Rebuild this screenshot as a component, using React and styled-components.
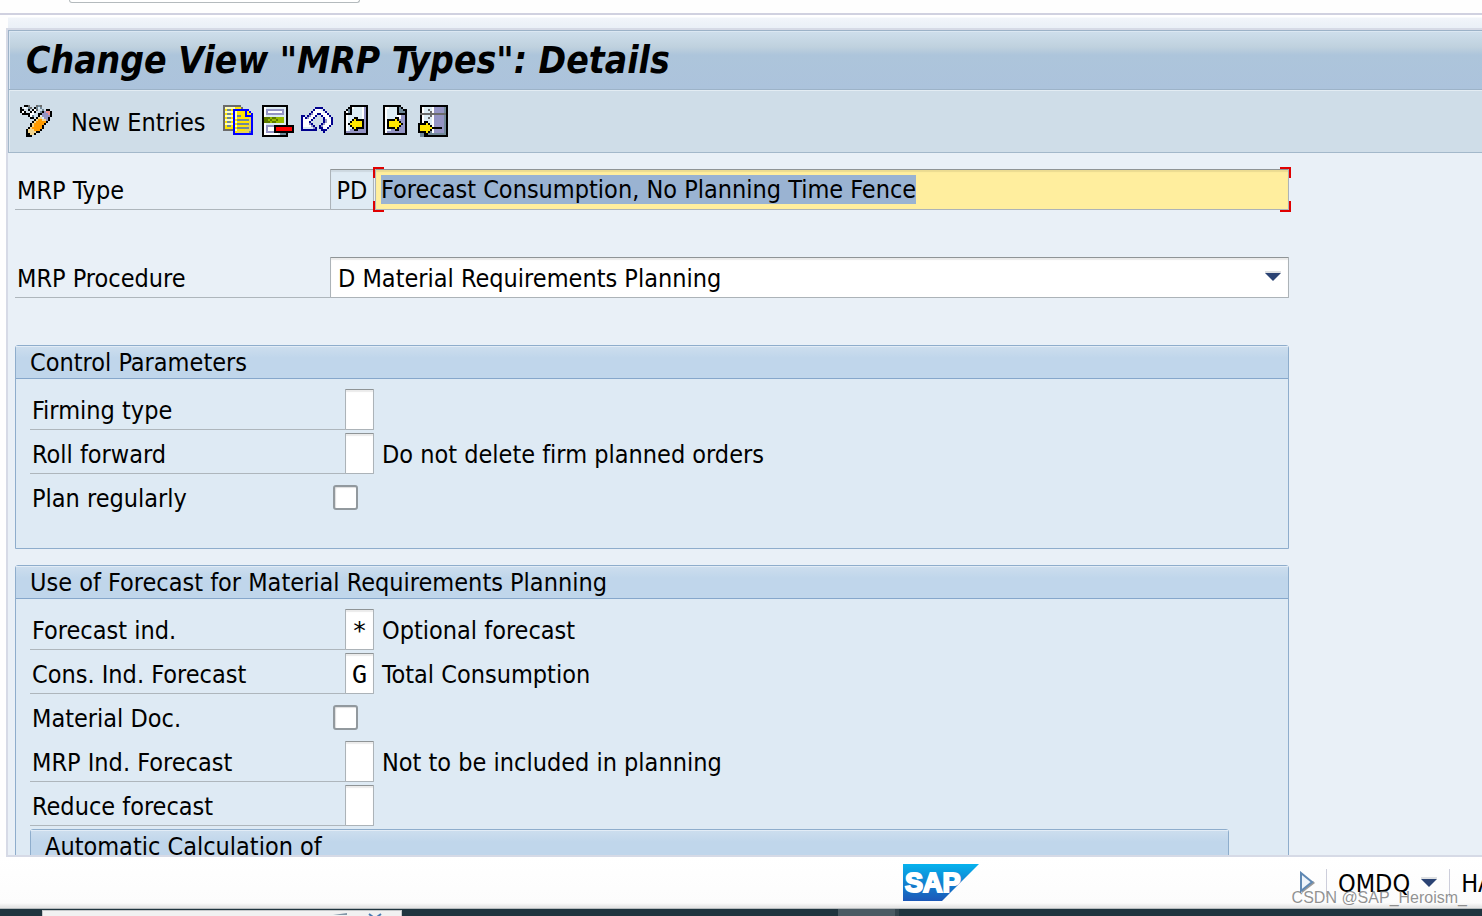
import React, { useEffect, useRef } from "react";
import styled, { createGlobalStyle } from "styled-components";

const GlobalStyle = createGlobalStyle`
  * {
    box-sizing: border-box;
  }

  body {
    margin: 0;
    background: #fefefe;
    color: #000;
    font-family: "DejaVu Sans Condensed", "Noto Sans", sans-serif;
    font-size: 25px;
    font-variant-ligatures: none;
    line-height: 30px;
  }

  button, input, select {
    font: inherit;
    color: inherit;
  }
`;

const Page = styled.div`
  position: relative;
  display: flex;
  flex-direction: column;
  height: 100vh;
  overflow: hidden;
`;

const CommandBar = styled.div`
  flex: none;
  height: 15px;
  padding-left: 69px;
  border-bottom: 2px solid #d0d1e0;
`;

const CommandInput = styled.input`
  display: block;
  width: 291px;
  height: 3px;
  padding: 0;
  border: 1px solid #b4babd;
  border-top: none;
  border-radius: 0 0 3px 3px;
  outline: none;
`;

const Shade = styled.div`
  flex: none;
  height: 13px;
  margin-left: 8px;
  background: linear-gradient(#ffffff 2px, #f1f5fa 3px, #eaf0f7);
`;

const Screen = styled.main`
  flex: 1;
  min-height: 0;
  margin-left: 6px;
  border: 2px solid #d6dae6;
  border-right: none;
  background: #e9f0f7;
  overflow: hidden;
`;

const TitleBar = styled.header`
  height: 60px;
  padding: 0 17px;
  border: 1px solid #9db3c8;
  border-right: none;
  background: linear-gradient(#cfdfec, #bfd1de 16px, #adc5db 24px, #acc3dc);
  box-shadow: inset 1px 1px #dbe7f2;
`;

const Title = styled.h1`
  margin: 0;
  font-size: 37px;
  font-style: italic;
  font-weight: bold;
  line-height: 60px;
  white-space: nowrap;
`;

const Toolbar = styled.div`
  display: flex;
  align-items: center;
  gap: 7px;
  height: 63px;
  padding-left: 11px;
  border: 1px solid #a3b8ca;
  border-top: none;
  border-right: none;
  background: #cfdde8;
  box-shadow: inset 1px 1px #e3ecf3;
`;

const IconButton = styled.button`
  width: 32px;
  height: 32px;
  padding: 0;
  border: none;
  background: none;

  svg {
    display: block;
  }
`;

const TextButton = styled.button`
  padding: 3px 10px 0 12px;
  border: none;
  background: none;
  white-space: nowrap;
`;

const Form = styled.div`
  max-width: 1288px;
  padding: 16px 7px 0;
`;

const Row = styled.div`
  display: flex;
  align-items: center;
  height: 41px;
  margin-bottom: ${(p) => (p.$spaced ? 47 : 3)}px;
`;

const Label = styled.label`
  flex: none;
  width: ${(p) => (p.$plain ? 303 : 315)}px;
  height: 41px;
  padding-left: 2px;
  border-bottom: ${(p) => (p.$plain ? "none" : "1px solid #aeb6bc")};
  line-height: 44px;
  white-space: nowrap;
`;

const Field = styled.input`
  flex: none;
  width: ${(p) => p.$width}px;
  height: 41px;
  padding: 2px 0 0;
  border: 1px solid #acb3b8;
  border-top-color: #8f9496;
  border-radius: 1px;
  outline: none;
  background: ${(p) => (p.readOnly ? "#dfebf4" : "#ffffff")};
  box-shadow: inset 0 2px 1px rgba(0, 0, 0, 0.08);
  font-family: ${(p) => (p.$mono ? '"DejaVu Sans Mono", monospace' : "inherit")};
  text-align: center;
`;

const FocusFrame = styled.div`
  position: relative;
  flex: 1;
  min-width: 0;
  margin-left: 1px;
`;

const DescriptionField = styled(Field)`
  display: block;
  width: 100%;
  padding: 0 0 0 5px;
  background: #ffee9e;
  text-align: left;

  &::selection {
    background: #9ab3d2;
    color: #000;
  }
`;

const Corner = styled.span`
  position: absolute;
  width: 11px;
  height: 11px;
  border: 0 solid #e00000;
  ${(p) => (p.$top ? "top: -2px; border-top-width: 2px;" : "bottom: -2px; border-bottom-width: 2px;")}
  ${(p) => (p.$left ? "left: -2px; border-left-width: 2px;" : "right: -2px; border-right-width: 2px;")}
`;

const SelectWrap = styled.div`
  position: relative;
  flex: 1;
  min-width: 0;

  svg {
    position: absolute;
    top: 14px;
    right: 7px;
    pointer-events: none;
  }
`;

const Select = styled.select`
  appearance: none;
  display: block;
  width: 100%;
  height: 41px;
  padding: 2px 30px 0 7px;
  border: 1px solid #acb3b8;
  border-top-color: #8f9496;
  border-radius: 1px;
  outline: none;
  background: #ffffff;
  box-shadow: inset 0 2px 1px rgba(0, 0, 0, 0.08);
`;

const Group = styled.section`
  margin: 0 ${(p) => (p.$nested ? "59px" : "0")} 16px 0;
  border: 1px solid #8eadcc;
  border-radius: 3px 3px 0 0;
  background: #deeaf4;
`;

const GroupTitle = styled.h2`
  height: 33px;
  margin: 0;
  padding-left: 14px;
  border-bottom: 1px solid #86a7cb;
  background: linear-gradient(#cddeee, #c0d6eb 12px, #c0d6eb);
  box-shadow: inset 0 1px #e2ecf6;
  font-size: 25px;
  font-weight: normal;
  line-height: 34px;
  white-space: nowrap;
`;

const GroupBody = styled.div`
  padding: 10px 0 ${(p) => (p.$short ? 27 : 0)}px 14px;
`;

const Checkbox = styled.input`
  appearance: none;
  width: 25px;
  height: 25px;
  margin: 0;
  border: 2px solid #92999e;
  border-radius: 3px;
  background: #ffffff;
  box-shadow: inset 1px 1px 1px #dddddd;

  &:checked {
    background: #4d6fa3;
  }
`;

const Note = styled.span`
  margin-left: 8px;
  padding-top: 2px;
  white-space: nowrap;
`;

const StatusBar = styled.footer`
  flex: none;
  display: flex;
  justify-content: flex-end;
  height: 52px;
  padding-top: 7px;
  border-bottom: 1px solid #b5babd;
  background: linear-gradient(#ffffff, #fcfcfc 46px, #e6e6e6 50px);
`;

const LogoLink = styled.a`
  height: 37px;
  margin-right: 321px;

  svg {
    display: block;
  }
`;

const StatusInfo = styled.div`
  display: flex;
  align-items: center;
  width: 182px;
  height: 38px;
  overflow: hidden;
`;

const StatusButton = styled.button`
  display: flex;
  flex: none;
  align-items: center;
  gap: 10px;
  padding: 0;
  border: none;
  background: none;
`;

const StatusText = styled.span`
  flex: none;
  padding-top: 2px;
  white-space: nowrap;
`;

const Divider = styled.span`
  flex: none;
  width: 1px;
  height: 28px;
  margin: 0 11px;
  background: #cdcedb;
`;

const Watermark = styled.span`
  position: absolute;
  right: 15px;
  bottom: 8px;
  color: rgba(110, 110, 110, 0.75);
  font-family: "Liberation Sans", sans-serif;
  font-size: 16px;
  line-height: 20px;
  white-space: nowrap;
`;

const Taskbar = styled.div`
  flex: none;
  display: flex;
  height: 7px;
  padding-left: 42px;
  background: #20353f;
`;

const TaskPreview = styled.div`
  width: 360px;
  margin-top: 1px;
  border: 1px solid #c5c8ca;
  border-bottom: none;
  background: #f1f1f1;
  overflow: hidden;

  svg {
    display: block;
    margin-left: 290px;
  }
`;

const ActiveTask = styled.div`
  width: 61px;
  margin-left: 436px;
  border-right: 4px solid #33444d;
  background: #4b5b64;
`;

const palette = {
  k: "#000000",
  g: "#6b6b6b",
  y: "#ffe600",
  l: "#ffffc0",
  c: "#e6d552",
  b: "#0000ff",
  s: "#708898",
  w: "#ffffff",
  v: "#9494c4",
  p: "#dcecf4",
  r: "#ff0000",
  i: "#f09090",
  n: "#5c7800",
  m: "#96ba00",
  N: "#00008c",
  o: "#ff9a00",
  t: "#f2d48c",
};

const changeIcon = [
  "..kkg...gsg.....",
  "k.wpsg.ksps.....",
  "kk..k.kwg..s.kk.",
  "kwk..kwk..skviik",
  ".kkkkww..kkvvvik",
  "....kws..kpvvvvk",
  ".....kk.kttpvvk.",
  ".......ktoottvk.",
  "......ktoooook..",
  ".....ktoooook...",
  ".....ktooook....",
  "....ktoooook....",
  "...ktttoook.....",
  "...kttttkk......",
  "...kkttk........",
  "...kkk..........",
];

const copyIcon = [
  "ggggggggg.......",
  "glllllyyyg......",
  "gyssybbbbbbbb...",
  "gllllblyyyybyb..",
  "gyssyblyyyybyyb.",
  "gllllblssyybbbb.",
  "gyssyblyyyyyycb.",
  "gllllbysssssscb.",
  "gyssyblyyyyyycb.",
  "gllllbysssssscb.",
  "gyssyblyyyyyccb.",
  "gyyyybysssssscb.",
  "gggggblyyyycccb.",
  ".....byccccccsb.",
  ".....bbbbbbbbbb.",
];

const deleteIcon = [
  "kkkkkkkkkkkkk...",
  "kwppppppppppk...",
  "kwvvvvvvvvvpk...",
  "kwvwwwwwwwvpk...",
  "kwvvvvvvvvvpk...",
  "kwppppppppppk...",
  "knnnmnnmmmmpk...",
  "knnmnmmnmmmpk...",
  "knnnmnnmmmmpk...",
  "kwppppppppppk...",
  "kwvvvvkkkkkkkkkk",
  "kwvwwwkrrrrrrrrk",
  "kwvwwwkrrrrrrrrk",
  "kwvvvvkkkkkkkkkk",
  "kwwwwwwwpsssk...",
  "kkkkkkkkkkkkk...",
];

const undoIcon = [
  "................",
  ".......NNNN.....",
  "......NwwwpN....",
  ".....NwwwwwpN...",
  "....NvwwNNwwwN..",
  "NN.NvwwN..NwwwN.",
  "NwNvwwN....NwwpN",
  "NwwwwN.....NvwwN",
  "NwwwN......NvwwN",
  "NwwwvN....NvwwwN",
  "NwwwwvN..NvwwwN.",
  "NpppppvN.NNwwN..",
  "NNNNNNNN..NNN...",
  "...........N....",
];

const previousIcon = [
  ".....kkkkkkkkk..",
  "....kkwppppwvk..",
  "...kskpppppwvk..",
  "..kwskpppppwvk..",
  "..kkkkpppppwvk..",
  "..kwpppppppwvk..",
  "..kwpppkkppwvk..",
  "..kwppkykkkkvk..",
  "..kwpkyyyyykvk..",
  "..kwkyyyyyykvk..",
  "..kwpkyyyyykvk..",
  "..kwppkykkkkvk..",
  "..kwpvvkkvvvvk..",
  "..kvvvvvvvvvvk..",
  "..kkkkkkkkkkkk..",
];

const nextIcon = [
  "..kkkkkkkkk.....",
  "..kwwppppksk....",
  "..kwpppppksskk..",
  "..kwpppppksssk..",
  "..kwpppppkkkkk..",
  "..kwpppppwwvvk..",
  "..kwppppkkwvvk..",
  "..kwkkkkykvvvk..",
  "..kwkyyyyykvvk..",
  "..kwkyyyyyykvk..",
  "..kwkyyyyykvvk..",
  "..kwkkkkykvvvk..",
  "..kwppvvkkvvvk..",
  "..kwvvvvvvvvvk..",
  "..kkkkkkkkkkkk..",
];

const selectBlockIcon = [
  ".kkkkkkkkkkkkkk.",
  ".kwppppwvvvvvsk.",
  ".kwppgpwvvvvvsk.",
  ".kwpppgwvvvvvsk.",
  ".gggggggggggggk.",
  ".kwpppgwvvvvvsk.",
  ".kwppgpwvvvvvsk.",
  ".kwppppwvvvvvsk.",
  ".kwkkppwvvvvvsk.",
  "kkkkykpwvvvvvsk.",
  "kyyyyykwvvvvvsk.",
  "kyyyyyykkkkkvsk.",
  "kyyyyykwvvvvvsk.",
  "kkkkykswvvvvvsk.",
  ".sskksssssssssk.",
  ".sskkkkkkkkkkkk.",
];

// one letter per pixel of the 16x16 icon
const PixelIcon = ({ rows }) => (
  <svg width="32" height="32" viewBox="0 0 16 16" shapeRendering="crispEdges">
    {rows.map((row, y) =>
      row
        .split("")
        .map((key, x) =>
          palette[key] ? (
            <rect key={`${x}-${y}`} x={x} y={y} width="1" height="1" fill={palette[key]} />
          ) : null
        )
    )}
  </svg>
);

const DownArrow = () => (
  <svg width="18" height="12" viewBox="0 0 18 12">
    <path d="M1 0h16v2H1z" fill="#dfe1e3" />
    <path d="M1 2h16L9 10z" fill="#2b4373" />
  </svg>
);

const SapLogo = () => (
  <svg width="76" height="37" viewBox="0 0 76 37">
    <defs>
      <linearGradient id="sap" x1="0" y1="0" x2="0" y2="1">
        <stop offset="0" stopColor="#06b3ee" />
        <stop offset="0.5" stopColor="#1182d0" />
        <stop offset="1" stopColor="#1d58b8" />
      </linearGradient>
    </defs>
    <path d="M0 0h76L39 37H0z" fill="url(#sap)" />
    <text
      x="2"
      y="28"
      fill="#ffffff"
      stroke="#ffffff"
      strokeWidth="2"
      fontFamily="Liberation Sans"
      fontWeight="bold"
      fontSize="27"
    >
      SAP
    </text>
  </svg>
);

const ExpandIcon = () => (
  <svg width="15" height="24" viewBox="0 0 15 24">
    <path d="M2 22V18L13 10l2 2z" fill="#9a9a9a" />
    <path d="M1 2v18L12 11z" fill="#eef4fa" stroke="#5f88b3" strokeWidth="2" />
  </svg>
);

const toolbarIcons = [
  { name: "Copy As", rows: copyIcon },
  { name: "Delete", rows: deleteIcon },
  { name: "Undo Change", rows: undoIcon },
  { name: "Previous Entry", rows: previousIcon },
  { name: "Next Entry", rows: nextIcon },
  { name: "Other Entry", rows: selectBlockIcon },
];

const controlFields = [
  { id: "firming", label: "Firming type", value: "" },
  { id: "roll", label: "Roll forward", value: "", note: "Do not delete firm planned orders" },
  { id: "plan", label: "Plan regularly", checkbox: true },
];

const forecastFields = [
  { id: "forecast", label: "Forecast ind.", value: "*", note: "Optional forecast" },
  { id: "cons", label: "Cons. Ind. Forecast", value: "G", note: "Total Consumption" },
  { id: "matdoc", label: "Material Doc.", checkbox: true },
  { id: "mrpind", label: "MRP Ind. Forecast", value: "", note: "Not to be included in planning" },
  { id: "reduce", label: "Reduce forecast", value: "" },
];

const FieldRow = ({ field }) => (
  <Row>
    <Label htmlFor={field.id} $plain={field.checkbox}>
      {field.label}
    </Label>
    {field.checkbox ? (
      <Checkbox id={field.id} type="checkbox" />
    ) : (
      <Field id={field.id} $width={29} $mono maxLength={1} defaultValue={field.value} />
    )}
    {field.note && <Note>{field.note}</Note>}
  </Row>
);

const App = () => {
  const descriptionRef = useRef(null);

  useEffect(() => {
    descriptionRef.current.focus();
    descriptionRef.current.select();
  }, []);

  return (
    <Page>
      <GlobalStyle />
      <CommandBar>
        <CommandInput aria-label="Command" />
      </CommandBar>
      <Shade />
      <Screen>
        <TitleBar>
          <Title>Change View "MRP Types": Details</Title>
        </TitleBar>
        <Toolbar>
          <IconButton aria-label="Display / Change">
            <PixelIcon rows={changeIcon} />
          </IconButton>
          <TextButton>New Entries</TextButton>
          {toolbarIcons.map((icon) => (
            <IconButton key={icon.name} aria-label={icon.name}>
              <PixelIcon rows={icon.rows} />
            </IconButton>
          ))}
        </Toolbar>

        <Form>
          <Row $spaced>
            <Label htmlFor="mrp-type">MRP Type</Label>
            <Field id="mrp-type" $width={44} readOnly value="PD" />
            <FocusFrame>
              <DescriptionField
                ref={descriptionRef}
                aria-label="Description"
                defaultValue="Forecast Consumption, No Planning Time Fence"
              />
              <Corner $top $left />
              <Corner $top />
              <Corner $left />
              <Corner />
            </FocusFrame>
          </Row>
          <Row $spaced>
            <Label htmlFor="procedure">MRP Procedure</Label>
            <SelectWrap>
              <Select id="procedure">
                <option>D Material Requirements Planning</option>
              </Select>
              <DownArrow />
            </SelectWrap>
          </Row>

          <Group>
            <GroupTitle>Control Parameters</GroupTitle>
            <GroupBody $short>
              {controlFields.map((field) => (
                <FieldRow key={field.id} field={field} />
              ))}
            </GroupBody>
          </Group>

          <Group>
            <GroupTitle>Use of Forecast for Material Requirements Planning</GroupTitle>
            <GroupBody>
              {forecastFields.map((field) => (
                <FieldRow key={field.id} field={field} />
              ))}
              <Group $nested>
                <GroupTitle>Automatic Calculation of</GroupTitle>
              </Group>
            </GroupBody>
          </Group>
        </Form>
      </Screen>

      <StatusBar>
        <LogoLink href="#" aria-label="SAP">
          <SapLogo />
        </LogoLink>
        <StatusInfo>
          <StatusButton aria-label="Expand">
            <ExpandIcon />
          </StatusButton>
          <Divider />
          <StatusButton>
            <StatusText>OMDQ</StatusText>
            <DownArrow />
          </StatusButton>
          <Divider />
          <StatusText>HA</StatusText>
        </StatusInfo>
      </StatusBar>
      <Taskbar>
        <TaskPreview>
          <svg width="60" height="6" viewBox="0 0 60 6">
            <path d="M0 4l14-2v2z" fill="#8297a8" />
            <path d="M36 3l4 3M48 3l-4 3" stroke="#4a7ab0" strokeWidth="2" />
          </svg>
        </TaskPreview>
        <ActiveTask />
      </Taskbar>
      <Watermark>CSDN @SAP_Heroism_</Watermark>
    </Page>
  );
};

export default App;
